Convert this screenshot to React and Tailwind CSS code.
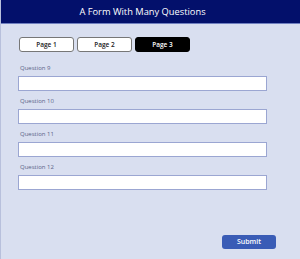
export default function App() {
  const qs = [9, 10, 11, 12];
  return (
    <div className="w-[300px] h-[259px] bg-[#d9dff0] flex flex-col border-l border-[#b8c0dc] overflow-hidden" style={{ fontFamily: '"Open Sans", sans-serif' }}>
      <div className="h-[24px] bg-[#03106b] border-b border-[#6f7fc0] flex items-center justify-center shrink-0 pr-[16px]">
        <span className="text-white text-[9.3px] leading-none">A Form With Many Questions</span>
      </div>
      <div className="flex gap-[3px] pl-[18px] mt-[13px]">
        <div className="w-[55px] h-[15px] bg-white border border-[#777] rounded-[3px] flex items-center justify-center text-[6.5px] font-semibold text-[#222]">Page 1</div>
        <div className="w-[55px] h-[15px] bg-white border border-[#777] rounded-[3px] flex items-center justify-center text-[6.5px] font-semibold text-[#222]">Page 2</div>
        <div className="w-[55px] h-[15px] bg-black border border-black rounded-[3px] flex items-center justify-center text-[6.5px] font-semibold text-white">Page 3</div>
      </div>
      <div className="flex flex-col gap-[5px] pl-[17px] mt-[11px]">
        {qs.map((q) => (
          <div key={q} className="flex flex-col">
            <div className="text-[6px] text-[#5b6488] h-[11px] leading-[11px] pl-[2px]">Question {q}</div>
            <div className="w-[249px] h-[15px] bg-white border border-[#9ba6d2] mt-[2px]"></div>
          </div>
        ))}
      </div>
      <div className="flex justify-end pr-[24px] mt-[45px]">
        <div className="w-[54px] h-[14px] bg-[#3a5cb6] rounded-[3px] flex items-center justify-center text-[7px] font-semibold text-white">Submit</div>
      </div>
    </div>
  );
}
